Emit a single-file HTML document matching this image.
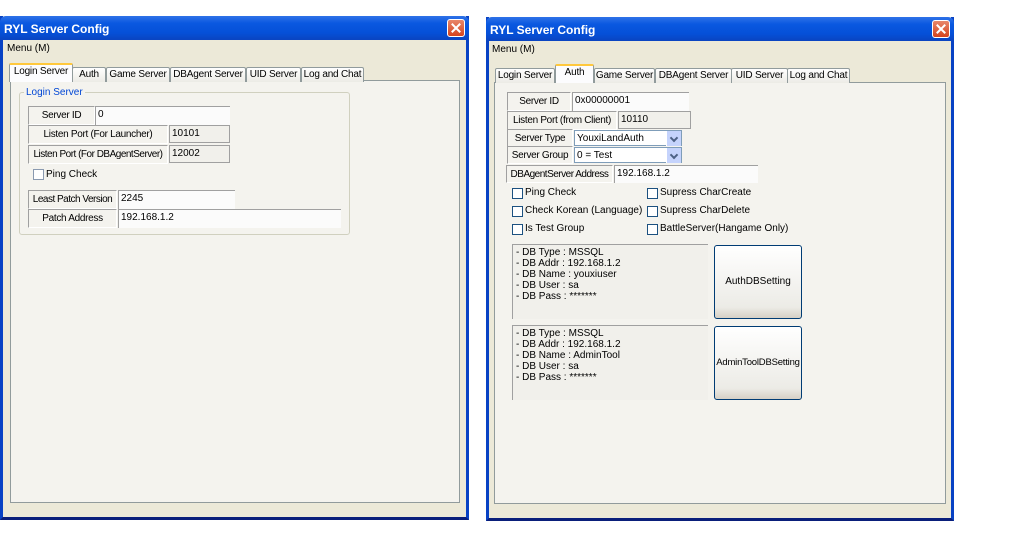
<!DOCTYPE html>
<html><head><meta charset="utf-8"><style>
body{margin:0;width:1023px;height:541px;background:#fff;position:relative;overflow:hidden;font-family:"Liberation Sans",sans-serif;font-size:10px;color:#000}
body *{white-space:nowrap}
.a{position:absolute}
.win{position:absolute;background:#ece9d8;border:3px solid #0842c4;border-top:none;border-bottom:3px solid #0a1f7a;box-sizing:border-box}
.title{position:absolute;left:0;right:0;top:0;height:24px;background:linear-gradient(#2f72e8,#0a58e0 30%,#0550d8 70%,#0a44c0);color:#fff;font-weight:bold;font-size:12px;line-height:26px;padding-left:4px;border-radius:6px 6px 0 0}
.close{position:absolute;top:3px;width:18px;height:18px;border:1px solid #fff;border-radius:3px;background:linear-gradient(#e8876a,#d5431e);box-sizing:border-box}
.close:before,.close:after{content:"";position:absolute;left:7px;top:2px;width:2px;height:12px;background:#fff;transform:rotate(45deg)}
.close:after{transform:rotate(-45deg)}
.panel{position:absolute;background:#f4f3ee;border:1px solid #919b9c}
.tab{position:absolute;height:14px;background:linear-gradient(#fff,#ecebe5);border:1px solid #919b9c;border-bottom:none;line-height:14px;text-align:center;border-radius:2px 2px 0 0;font-size:10px;overflow:hidden;letter-spacing:-0.2px}
.tab.on{background:#fcfcfe;border-top:2px solid #ffc83c;height:17px;z-index:2}
.lbl{position:absolute;border-top:1px solid #a0a0a0;border-left:1px solid #a0a0a0;border-bottom:1px solid #fff;border-right:1px solid #fff;box-sizing:border-box;text-align:center;line-height:17px;overflow:hidden;letter-spacing:-0.3px}
.fld{position:absolute;background:#fbfbfb;border-top:1px solid #a0a0a0;border-left:1px solid #a0a0a0;box-sizing:border-box;line-height:16px;padding-left:2px}
.fld.g{background:#f1f0eb;border:1px solid #a0a0a0}
.cb{position:absolute;width:11px;height:11px;border:1px solid #1c5180;background:#fff;box-sizing:border-box}
.combo{position:absolute;background:#fff;border:1px solid #7f9db9;box-sizing:border-box;line-height:15px;padding-left:2px}
.combo i{position:absolute;right:0;top:0;width:14px;height:15px;background:#c5d3fc;border-left:1px solid #fff}
.combo i:after{content:"";position:absolute;left:4px;top:4px;width:4px;height:4px;border-right:2px solid #4d6185;border-bottom:2px solid #4d6185;transform:rotate(45deg)}
.tb{position:absolute;border-top:1px solid #a0a0a0;border-left:1px solid #a0a0a0;background:#f1f0eb;padding:2px 3px;line-height:11px;box-sizing:border-box}
.btn{position:absolute;border:1px solid #003c74;border-radius:3px;background:linear-gradient(#fff,#ecebe6 85%,#d6d0c5);text-align:center;box-sizing:border-box}
</style></head><body>

<div class="win" style="left:0;top:16px;width:469px;height:504px">
 <div class="title" style="left:-3px;right:-3px">RYL Server Config</div>
 <div class="close" style="right:1px"></div>
</div>
<div class="a" style="left:7px;top:43px">Menu (M)</div>
<div class="panel" style="left:10px;top:80px;width:448px;height:421px"></div>
<div class="tab on" style="left:9px;top:63px;width:62px">Login Server</div>
<div class="tab" style="left:72px;top:67px;width:32px">Auth</div>
<div class="tab" style="left:106px;top:67px;width:62px">Game Server</div>
<div class="tab" style="left:170px;top:67px;width:74px">DBAgent Server</div>
<div class="tab" style="left:246px;top:67px;width:53px">UID Server</div>
<div class="tab" style="left:301px;top:67px;width:61px">Log and Chat</div>
<div class="a" style="left:19px;top:92px;width:329px;height:141px;border:1px solid #d0d0bf;border-radius:3px"></div>
<div class="a" style="left:24px;top:87px;background:#f4f3ee;color:#0046d5;padding:0 2px">Login Server</div>
<div class="lbl" style="left:28px;top:106px;width:67px;height:19px">Server ID</div>
<div class="fld" style="left:95px;top:106px;width:135px;height:19px">0</div>
<div class="lbl" style="left:28px;top:125px;width:140px;height:19px">Listen Port (For Launcher)</div>
<div class="fld g" style="left:169px;top:125px;width:61px;height:18px">10101</div>
<div class="lbl" style="left:28px;top:145px;width:140px;height:19px;letter-spacing:-0.5px">Listen Port (For DBAgentServer)</div>
<div class="fld g" style="left:169px;top:145px;width:61px;height:18px">12002</div>
<div class="cb" style="left:33px;top:169px;border-color:#8a9ab0"></div>
<div class="a" style="left:46px;top:169px">Ping Check</div>
<div class="lbl" style="left:28px;top:190px;width:89px;height:19px;letter-spacing:-0.5px">Least Patch Version</div>
<div class="fld" style="left:118px;top:190px;width:117px;height:19px">2245</div>
<div class="lbl" style="left:28px;top:209px;width:89px;height:19px">Patch Address</div>
<div class="fld" style="left:118px;top:209px;width:223px;height:19px">192.168.1.2</div>

<div class="win" style="left:486px;top:17px;width:468px;height:504px">
 <div class="title" style="left:-3px;right:-3px">RYL Server Config</div>
 <div class="close" style="right:1px"></div>
</div>
<div class="a" style="left:492px;top:44px">Menu (M)</div>
<div class="panel" style="left:494px;top:82px;width:450px;height:420px"></div>
<div class="tab" style="left:495px;top:68px;width:58px">Login Server</div>
<div class="tab on" style="left:555px;top:64px;width:37px">Auth</div>
<div class="tab" style="left:594px;top:68px;width:59px">Game Server</div>
<div class="tab" style="left:655px;top:68px;width:75px">DBAgent Server</div>
<div class="tab" style="left:731px;top:68px;width:55px">UID Server</div>
<div class="tab" style="left:787px;top:68px;width:61px">Log and Chat</div>
<div class="lbl" style="left:507px;top:92px;width:64px;height:19px">Server ID</div>
<div class="fld" style="left:572px;top:92px;width:117px;height:19px">0x00000001</div>
<div class="lbl" style="left:507px;top:111px;width:110px;height:19px">Listen Port (from Client)</div>
<div class="fld g" style="left:618px;top:111px;width:73px;height:18px">10110</div>
<div class="lbl" style="left:507px;top:129px;width:66px;height:18px">Server Type</div>
<div class="combo" style="left:574px;top:130px;width:108px;height:16px">YouxiLandAuth<i></i></div>
<div class="lbl" style="left:507px;top:146px;width:66px;height:18px">Server Group</div>
<div class="combo" style="left:574px;top:147px;width:108px;height:16px">0 = Test<i></i></div>
<div class="lbl" style="left:506px;top:165px;width:107px;height:18px;letter-spacing:-0.5px">DBAgentServer Address</div>
<div class="fld" style="left:614px;top:165px;width:144px;height:18px">192.168.1.2</div>
<div class="cb" style="left:512px;top:188px"></div><div class="a" style="left:525px;top:187px">Ping Check</div>
<div class="cb" style="left:512px;top:206px"></div><div class="a" style="left:525px;top:205px">Check Korean (Language)</div>
<div class="cb" style="left:512px;top:224px"></div><div class="a" style="left:525px;top:223px">Is Test Group</div>
<div class="cb" style="left:647px;top:188px"></div><div class="a" style="left:660px;top:187px">Supress CharCreate</div>
<div class="cb" style="left:647px;top:206px"></div><div class="a" style="left:660px;top:205px">Supress CharDelete</div>
<div class="cb" style="left:647px;top:224px"></div><div class="a" style="left:660px;top:223px">BattleServer(Hangame Only)</div>
<div class="tb" style="left:512px;top:244px;width:196px;height:75px">- DB Type : MSSQL<br>- DB Addr : 192.168.1.2<br>- DB Name : youxiuser<br>- DB User : sa<br>- DB Pass : *******</div>
<div class="btn" style="left:714px;top:245px;width:88px;height:74px;line-height:72px">AuthDBSetting</div>
<div class="tb" style="left:512px;top:325px;width:196px;height:75px">- DB Type : MSSQL<br>- DB Addr : 192.168.1.2<br>- DB Name : AdminTool<br>- DB User : sa<br>- DB Pass : *******</div>
<div class="btn" style="left:714px;top:326px;width:88px;height:74px;line-height:72px;font-size:9.5px;letter-spacing:-0.2px">AdminToolDBSetting</div>
</body></html>
